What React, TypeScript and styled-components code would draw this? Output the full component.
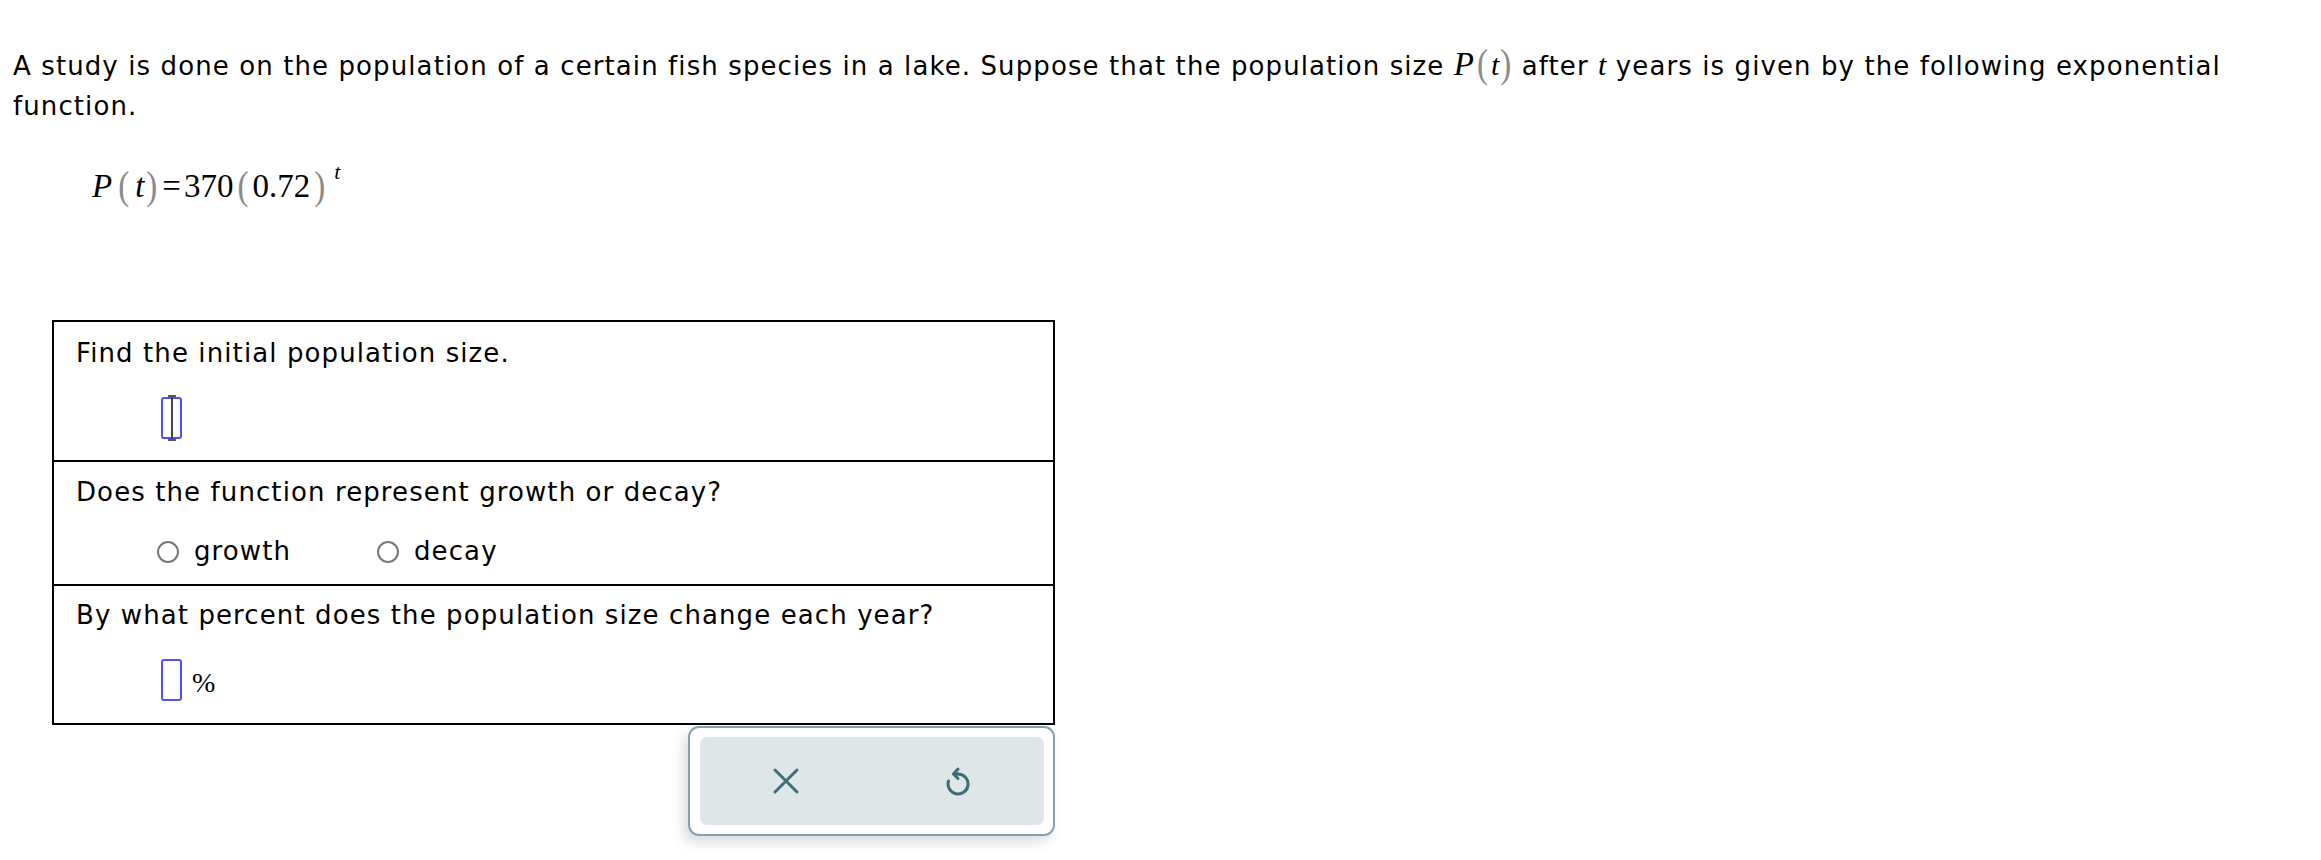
import React from 'react';
import styled, { createGlobalStyle } from 'styled-components';

const GlobalStyle = createGlobalStyle`
  html, body {
    margin: 0;
    padding: 0;
    background: #ffffff;
  }
  body {
    font-family: "DejaVu Sans", Verdana, sans-serif;
    color: #000000;
  }
`;

const Page = styled.div`
  padding: 44px 0 40px 13px;
`;

const Intro = styled.p`
  margin: 0;
  font-size: 26px;
  line-height: 40px;
  letter-spacing: 1.1px;
`;

const MathText = styled.span<{ size?: number; italic?: boolean }>`
  font-family: "Liberation Serif", "Times New Roman", serif;
  font-style: ${p => (p.italic ? 'italic' : 'normal')};
  font-size: ${p => p.size ?? 33}px;
  letter-spacing: 0;
`;

const Paren = styled.span<{ size?: number; gap?: number }>`
  display: inline-block;
  font-family: "Liberation Serif", "Times New Roman", serif;
  font-size: ${p => p.size ?? 33}px;
  letter-spacing: 0;
  color: #8a8a8a;
  transform: scaleY(1.2);
  margin: 0 ${p => p.gap ?? 1}px;
`;

const Op = styled.span`
  margin: 0 3px;
`;

const Sup = styled.sup`
  font-family: "Liberation Serif", "Times New Roman", serif;
  font-style: italic;
  font-size: 22px;
  vertical-align: 18px;
  line-height: 0;
  margin-left: 5px;
`;

const Equation = styled.div`
  margin: 38px 0 0 79px;
  line-height: 44px;
  font-family: "Liberation Serif", "Times New Roman", serif;
  font-size: 33px;
  white-space: nowrap;
`;

const Work = styled.div`
  width: 1003px;
  margin: 112px 0 0 39px;
  display: flex;
  flex-direction: column;
`;

const Table = styled.div`
  border: 2px solid #000;
  display: flex;
  flex-direction: column;
`;

const Row = styled.div<{ first?: boolean; padTop: number; padBottom: number }>`
  border-top: ${p => (p.first ? 'none' : '2px solid #000')};
  padding: ${p => p.padTop}px 22px ${p => p.padBottom}px 22px;
  display: flex;
  flex-direction: column;
`;

const Prompt = styled.div`
  font-size: 26px;
  line-height: 40px;
  letter-spacing: 1.1px;
`;

const AnswerLine = styled.div<{ gap: number }>`
  display: flex;
  align-items: center;
  margin: ${p => p.gap}px 0 0 85px;
`;

const AnswerBox = styled.span`
  position: relative;
  display: inline-block;
  box-sizing: border-box;
  width: 21px;
  height: 42px;
  border: 2px solid #4f4fff;
  border-radius: 3px;
`;

const Caret = styled.span`
  position: absolute;
  left: 50%;
  top: -4px;
  bottom: -4px;
  width: 2px;
  margin-left: -1px;
  background: #444;

  &::before,
  &::after {
    content: '';
    position: absolute;
    left: -3px;
    width: 8px;
    height: 2px;
    background: #555;
  }
  &::before {
    top: 0;
  }
  &::after {
    bottom: 0;
  }
`;

const Unit = styled.span`
  font-family: "Liberation Serif", "Times New Roman", serif;
  font-size: 28px;
  margin-left: 10px;
  padding-top: 6px;
`;

const Choices = styled.div`
  display: flex;
  margin: 19px 0 0 81px;
`;

const Choice = styled.label`
  display: flex;
  align-items: center;
  min-width: 220px;
  font-size: 26px;
  line-height: 40px;
  letter-spacing: 1.1px;
`;

const Radio = styled.span`
  display: inline-block;
  box-sizing: border-box;
  width: 22px;
  height: 22px;
  border: 2px solid #767676;
  border-radius: 50%;
  margin-right: 15px;
  margin-top: 2px;
`;

const ToolPanel = styled.div`
  align-self: flex-end;
  box-sizing: border-box;
  width: 367px;
  height: 110px;
  margin-top: 1px;
  border: 2px solid #86a3ab;
  border-radius: 11px;
  padding: 9px 9px 9px 10px;
  background: #fff;
  box-shadow: -5px 7px 12px rgba(60, 80, 90, 0.18);
`;

const ToolTray = styled.div`
  display: flex;
  height: 100%;
  background: #dfe6e8;
  border-radius: 7px;
`;

const ToolButton = styled.button`
  flex: 1;
  border: none;
  background: transparent;
  display: flex;
  align-items: center;
  justify-content: center;
  padding: 0;
  cursor: pointer;
  color: #3e6d78;
`;

const CloseIcon = () => (
  <svg width="28" height="28" viewBox="0 0 28 28" fill="none" stroke="currentColor" strokeWidth="3" strokeLinecap="round">
    <path d="M3 3 L25 25 M25 3 L3 25" />
  </svg>
);

const ResetIcon = () => (
  <svg width="30" height="30" viewBox="0 0 30 30" fill="none" stroke="currentColor" strokeWidth="3" strokeLinecap="round" strokeLinejoin="round">
    <path d="M15 8 A10 10 0 1 1 5.5 15" />
    <path d="M15 8 L11 8" />
    <path d="M15 3 L10.5 8 L15 12.5" />
  </svg>
);

const App: React.FC = () => {
  return (
    <>
      <GlobalStyle />
      <Page>
        <Intro>
          A study is done on the population of a certain fish species in a lake. Suppose that the population size{' '}
          <MathText italic>P</MathText>
          <Paren gap={3}>(</Paren>
          <MathText italic size={30}>t</MathText>
          <Paren>)</Paren> after <MathText italic size={30}>t</MathText> years is given by the following exponential
          <br />
          function.
        </Intro>

        <Equation>
          <MathText italic>P</MathText>
          <Paren gap={6}>(</Paren>
          <MathText italic>t</MathText>
          <Paren gap={2}>)</Paren>
          <Op>=</Op>
          370
          <Paren gap={4}>(</Paren>0.72<Paren gap={4}>)</Paren>
          <Sup>t</Sup>
        </Equation>

        <Work>
          <Table>
            <Row first padTop={11} padBottom={21}>
              <Prompt>Find the initial population size.</Prompt>
              <AnswerLine gap={24}>
                <AnswerBox>
                  <Caret />
                </AnswerBox>
              </AnswerLine>
            </Row>
            <Row padTop={10} padBottom={13}>
              <Prompt>Does the function represent growth or decay?</Prompt>
              <Choices>
                <Choice>
                  <Radio />
                  growth
                </Choice>
                <Choice>
                  <Radio />
                  decay
                </Choice>
              </Choices>
            </Row>
            <Row padTop={9} padBottom={22}>
              <Prompt>By what percent does the population size change each year?</Prompt>
              <AnswerLine gap={24}>
                <AnswerBox />
                <Unit>%</Unit>
              </AnswerLine>
            </Row>
          </Table>
          <ToolPanel>
            <ToolTray>
              <ToolButton aria-label="Clear">
                <CloseIcon />
              </ToolButton>
              <ToolButton aria-label="Reset">
                <ResetIcon />
              </ToolButton>
            </ToolTray>
          </ToolPanel>
        </Work>
      </Page>
    </>
  );
};

export default App;
